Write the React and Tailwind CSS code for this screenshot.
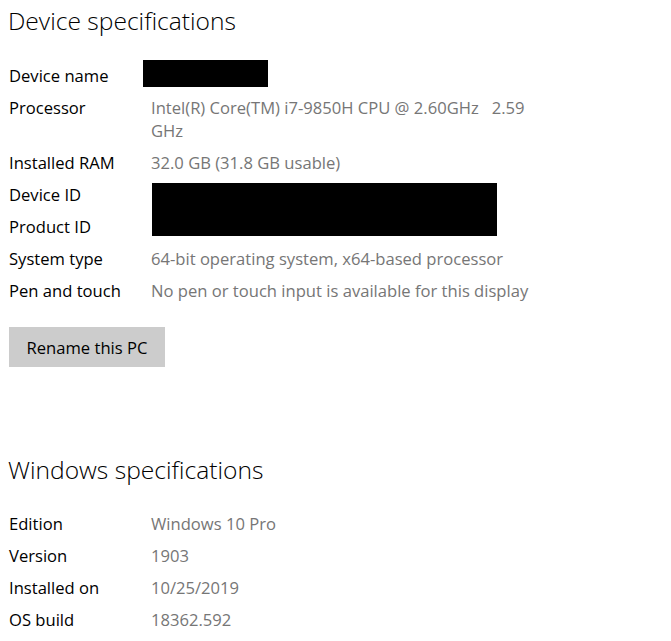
import React from "react";

const font = { fontFamily: '"Open Sans", "Noto Sans", sans-serif' };

function Row({ label, children, redact }) {
  return (
    <div className="flex">
      <div className="w-[142px] shrink-0 text-[#000000]">{label}</div>
      <div className="relative text-[#767676]">
        {children}
        {redact}
      </div>
    </div>
  );
}

export default function App() {
  return (
    <div
      className="w-[671px] h-[641px] bg-white pl-[9px] text-[16.6px] leading-[23px] overflow-hidden"
      style={font}
    >
      <h1 className="pt-[5px] -ml-[1px] text-[24.6px] leading-[32px] font-light text-black">
        Device specifications
      </h1>
      <div className="mt-[27px] flex flex-col gap-[9px]">
        <Row
          label="Device name"
          redact={
            <div className="absolute -top-[4px] -left-[8px] w-[125px] h-[27px] bg-black" />
          }
        >
          &nbsp;
        </Row>
        <Row label="Processor">
          Intel(R) Core(TM) i7-9850H CPU @ 2.60GHz&nbsp;&nbsp;&nbsp;2.59
          <br />
          GHz
        </Row>
        <Row label="Installed RAM">32.0 GB (31.8 GB usable)</Row>
        <Row
          label="Device ID"
          redact={
            <div className="absolute top-0 left-[1px] w-[345px] h-[53px] bg-black" />
          }
        >
          &nbsp;
        </Row>
        <Row label="Product ID">&nbsp;</Row>
        <Row label="System type">64-bit operating system, x64-based processor</Row>
        <Row label="Pen and touch">No pen or touch input is available for this display</Row>
      </div>
      <button className="mt-[25px] w-[156px] h-[40px] bg-[#cccccc] text-black text-[16.6px]">
        Rename this PC
      </button>
      <h1 className="mt-[87px] -ml-[1px] text-[24.6px] leading-[32px] font-light text-black">
        Windows specifications
      </h1>
      <div className="mt-[26px] flex flex-col gap-[9px]">
        <Row label="Edition">Windows 10 Pro</Row>
        <Row label="Version">1903</Row>
        <Row label="Installed on">10/25/2019</Row>
        <Row label="OS build">18362.592</Row>
      </div>
    </div>
  );
}
